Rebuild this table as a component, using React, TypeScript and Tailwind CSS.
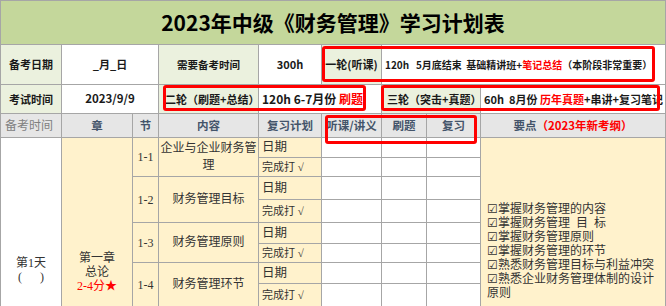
const SECTIONS = [
  { no: "1-1", title: ["企业与企业财务管", "理"] },
  { no: "1-2", title: ["财务管理目标"] },
  { no: "1-3", title: ["财务管理原则"] },
  { no: "1-4", title: ["财务管理环节"] },
];

const POINTS = [
  "☑掌握财务管理的内容",
  "☑掌握财务管理  目  标",
  "☑掌握财务管理原则",
  "☑掌握财务管理的环节",
  "☑熟悉财务管理目标与利益冲突",
  "☑熟悉企业财务管理体制的设计",
  "原则",
];

const cell = "border-r border-b border-[#a6a6a6] flex items-center overflow-hidden";
const sans = "font-['Noto_Sans_CJK_SC',sans-serif]";
const serif = "font-['Liberation_Serif','Noto_Sans_CJK_SC',serif]";

export default function App() {
  return (
    <div className="relative h-[306px] w-[666px] overflow-hidden bg-white">
      <div
        className={`grid border-l border-t border-[#a6a6a6] text-[#1a1a1a] ${sans} grid-cols-[61px_71px_26px_100px_63px_60px_45px_54px_185px] grid-rows-[44px_40px_29px_24px_20px_19px_23px_23px_21px_19px_21px_23px]`}
      >
        {/* title */}
        <div className={`${cell} col-span-9 justify-center bg-[#c4d79b] text-[21px] font-bold text-black`}>
          2023年中级《财务管理》学习计划表
        </div>

        {/* row 2 */}
        <div className={`${cell} justify-center bg-[#ebf1de] text-[11px] font-bold`}>备考日期</div>
        <div className={`${cell} col-span-2 justify-center text-[11px] font-bold`}>_月_日</div>
        <div className={`${cell} justify-center bg-[#ebf1de] text-[10.5px] font-bold`}>需要备考时间</div>
        <div className={`${cell} justify-center text-[11px] font-bold`}>300h</div>
        <div className={`${cell} justify-center bg-[#ebf1de] text-[11px] font-bold`}>一轮(听课)</div>
        <div className={`${cell} col-span-3 whitespace-pre pl-[3px] text-[10px] font-bold`}>
          {"120h   5月底结束  基础精讲班+"}
          <span className="text-[#ff0000]">笔记总结</span>
          {"（本阶段非常重要）"}
        </div>

        {/* row 3 */}
        <div className={`${cell} justify-center bg-[#ebf1de] text-[11px] font-bold`}>考试时间</div>
        <div className={`${cell} col-span-2 justify-center text-[11.5px] font-bold`}>2023/9/9</div>
        <div className={`${cell} justify-start bg-[#ebf1de] pl-[6px] text-[11px] font-bold`}>二轮（刷题+总结）</div>
        <div className={`${cell} col-span-2 whitespace-pre pl-[3px] text-[12px] font-bold`}>
          {"120h 6-7月份 "}
          <span className="text-[#ff0000]">刷题</span>
        </div>
        <div className={`${cell} col-span-2 bg-[#ebf1de] pl-[5px] text-[11px] font-bold`}>三轮（突击+真题）</div>
        <div className={`${cell} whitespace-pre pl-[3px] text-[11px] font-bold`}>
          {"60h  8月份 "}
          <span className="text-[#ff0000]">历年真题</span>
          +串讲+复习笔记
        </div>

        {/* header */}
        <div className={`${cell} ${serif} bg-[#e6e6e6] pl-[4px] text-[12px] text-[#7f7f7f]`}>备考时间</div>
        {["章", "节", "内容", "复习计划", "听课/讲义", "刷题", "复习"].map((h) => (
          <div key={h} className={`${cell} justify-center bg-[#e6e6e6] text-[11.5px] font-semibold text-[#44546a]`}>
            {h}
          </div>
        ))}
        <div className={`${cell} justify-center bg-[#e6e6e6] text-[11.5px] font-semibold text-[#44546a]`}>
          要点<span className="font-bold text-[#ff0000]">（2023年新考纲）</span>
        </div>

        {/* body */}
        {SECTIONS.map((s, i) => (
          <Section key={s.no} no={s.no} title={s.title} first={i === 0} />
        ))}
      </div>

      {/* red highlight boxes */}
      <div className="absolute left-[322px] top-[46px] h-[36px] w-[333px] rounded-[3px] border-[3px] border-[#ff0000]" />
      <div className="absolute left-[163px] top-[85px] h-[26px] w-[203px] rounded-[3px] border-[3px] border-[#ff0000]" />
      <div className="absolute left-[381px] top-[85px] h-[26px] w-[279px] rounded-[3px] border-[3px] border-[#ff0000]" />
      <div className="absolute left-[325px] top-[115px] h-[29px] w-[152px] rounded-[3px] border-[3px] border-[#ff0000]" />
    </div>
  );
}

function Section({ no, title, first }: { no: string; title: string[]; first: boolean }) {
  return (
    <>
      {first && (
        <>
          <div className={`${cell} ${serif} row-span-8 flex-col justify-start pt-[118px] text-[12px] leading-[14px] text-[#333]`}>
            <span>第1天</span>
            <span className="whitespace-pre">{"(      )"}</span>
          </div>
          <div className={`${cell} ${serif} row-span-8 flex-col justify-start bg-[#fff2cc] pt-[113px] text-[12px] leading-[14px] text-[#333]`}>
            <span>第一章</span>
            <span>总论</span>
            <span className="text-[#ff0000]">2-4分★</span>
          </div>
        </>
      )}
      <div className={`${cell} ${serif} row-span-2 justify-center bg-[#fff2cc] text-[12px] text-[#333]`}>{no}</div>
      <div className={`${cell} ${serif} row-span-2 flex-col justify-center bg-[#fff2cc] text-[12px] leading-[17px] text-[#333]`}>
        {title.map((t) => (
          <span key={t}>{t}</span>
        ))}
      </div>
      <div className={`${cell} ${serif} bg-[#fff2cc] pl-[3px] text-[12.5px] text-[#333]`}>日期</div>
      <div className={cell} />
      <div className={cell} />
      <div className={cell} />
      {first && (
        <div className={`${cell} ${serif} row-span-8 flex-col items-start justify-start bg-[#fff2cc] pl-[6px] pt-[64px] text-[12px] leading-[14px] text-[#333]`}>
          {POINTS.map((p) => (
            <span key={p} className="whitespace-pre">
              {p}
            </span>
          ))}
        </div>
      )}
      <div className={`${cell} ${serif} bg-[#fff2cc] pl-[3px] text-[11px] text-[#333]`}>完成打 √</div>
      <div className={cell} />
      <div className={cell} />
      <div className={cell} />
    </>
  );
}
